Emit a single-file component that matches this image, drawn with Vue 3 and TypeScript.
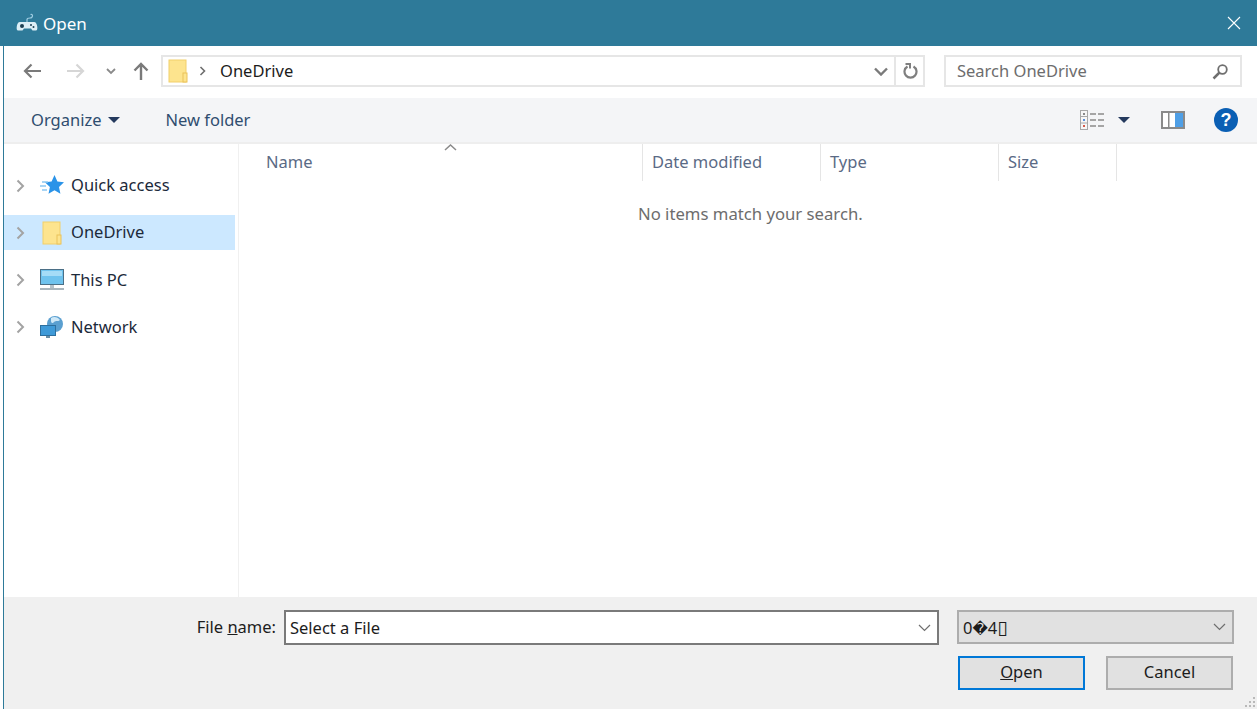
<script setup lang="ts">
const navItems = [
  { id: 'quick', label: 'Quick access' },
  { id: 'drive', label: 'OneDrive', selected: true },
  { id: 'pc', label: 'This PC' },
  { id: 'net', label: 'Network' },
]

const columns = [
  { label: 'Name', width: 404 },
  { label: 'Date modified', width: 178 },
  { label: 'Type', width: 178 },
  { label: 'Size', width: 118 },
]
</script>

<template>
  <div class="dialog">
    <header class="titlebar">
      <svg class="app-icon" width="22" height="20" viewBox="0 0 22 20">
        <path d="M11 9V6.500c0-1.500 1.500-1.500 3-1.500s2.500-.5 2.500-2.500c0-1-1-1.500-2-1" fill="none" stroke="#9fcde2" stroke-width="1.200" />
        <path d="M4 9h14c2 0 3 2 3.300 5 .2 2-.2 3.500-1.300 3.500h-3.500l-1.500-2h-7l-1.500 2H2c-1.100 0-1.500-1.500-1.300-3.500C1 11 2 9 4 9z" fill="#dcEEf6" />
        <circle cx="6" cy="13" r="2" fill="#1d3f52" />
        <circle cx="15" cy="12" r="1" fill="#1d3f52" />
        <circle cx="17.500" cy="14" r="1" fill="#1d3f52" />
      </svg>
      <span class="title">Open</span>
      <svg class="close" width="14" height="14" viewBox="0 0 14 14">
        <path d="M1 1l12 12M13 1L1 13" stroke="#fff" stroke-width="1.100" fill="none" />
      </svg>
    </header>

    <div class="body">
      <div class="navbar">
        <button class="nav-btn back">
          <svg width="20" height="18" viewBox="0 0 20 18"><path d="M19 9H3M9.500 2.500L3 9l6.500 6.500" fill="none" stroke="#7a7a7a" stroke-width="2.200" /></svg>
        </button>
        <button class="nav-btn forward">
          <svg width="20" height="18" viewBox="0 0 20 18"><path d="M1 9h16M10.500 2.500L17 9l-6.500 6.500" fill="none" stroke="#d6d6d6" stroke-width="2.200" /></svg>
        </button>
        <button class="nav-btn recent">
          <svg width="10" height="7" viewBox="0 0 10 7"><path d="M1 1l4 4 4-4" fill="none" stroke="#8a8a8a" stroke-width="1.800" /></svg>
        </button>
        <button class="nav-btn up">
          <svg width="18" height="20" viewBox="0 0 18 20"><path d="M9 19V3M2.500 9.500L9 3l6.500 6.500" fill="none" stroke="#7a7a7a" stroke-width="2.400" /></svg>
        </button>
        <div class="address">
          <svg class="folder" width="20" height="24" viewBox="0 0 20 24">
            <rect x="1" y="1" width="17" height="22" fill="#fde48e" stroke="#f2cf6a" />
            <rect x="15" y="14" width="4" height="9" fill="#fde48e" stroke="#eac25a" />
          </svg>
          <svg class="crumb" width="7" height="10" viewBox="0 0 7 10"><path d="M1.500 1l4 4-4 4" fill="none" stroke="#6e6e6e" stroke-width="1.600" /></svg>
          <span class="crumb-label">OneDrive</span>
          <svg class="addr-chevron" width="14" height="9" viewBox="0 0 14 9"><path d="M1 1.500l6 6 6-6" fill="none" stroke="#7a7a7a" stroke-width="2.400" /></svg>
          <div class="refresh">
            <svg width="16" height="18" viewBox="0 0 16 18">
              <path d="M5.500 4.500a6 6 0 1 0 6 0" fill="none" stroke="#7f7f7f" stroke-width="2.200" />
              <path d="M3.500 2h4.500v4.500" fill="none" stroke="#7f7f7f" stroke-width="2" />
            </svg>
          </div>
        </div>
        <div class="search">
          <span class="search-text">Search OneDrive</span>
          <svg width="17" height="17" viewBox="0 0 17 17">
            <circle cx="10.500" cy="6.500" r="4.300" fill="none" stroke="#6f6f6f" stroke-width="1.800" />
            <path d="M7.500 9.500L1.500 15.500" stroke="#6f6f6f" stroke-width="2.500" fill="none" />
          </svg>
        </div>
      </div>

      <div class="commandbar">
        <span class="cmd organize">Organize</span>
        <span class="caret"></span>
        <span class="cmd new-folder">New folder</span>
        <div class="cmd-right">
          <svg class="views" width="25" height="20" viewBox="0 0 25 20">
            <rect x="0.500" y="0.500" width="7" height="19" fill="#f7f7f7" stroke="#a8a8a8" />
            <path d="M1 6.500h6M1 13h6" stroke="#a8a8a8" />
            <rect x="3" y="3" width="2" height="2" fill="#8a8a8a" />
            <rect x="3" y="9" width="2" height="2" fill="#5b8fd8" />
            <rect x="3" y="15" width="2" height="2" fill="#d45a4a" />
            <path d="M10 4h6M18 4h6M10 10h6M18 10h6M10 16h6M18 16h6" stroke="#8a8a8a" stroke-width="1.300" />
          </svg>
          <span class="caret views-caret"></span>
          <svg class="pane" width="24" height="18" viewBox="0 0 24 18">
            <rect x="1" y="1" width="22" height="16" fill="#fff" stroke="#8a8a8a" stroke-width="2" />
            <rect x="7" y="2" width="1.500" height="14" fill="#8a8a8a" />
            <rect x="14" y="2" width="8" height="14" fill="#4f9fe6" />
          </svg>
          <svg class="help" width="24" height="24" viewBox="0 0 24 24">
            <circle cx="12" cy="12" r="12" fill="#0a5fb4" />
            <text x="12" y="18" text-anchor="middle" class="help-mark">?</text>
          </svg>
        </div>
      </div>

      <div class="main">
        <nav class="sidebar">
          <div v-for="item in navItems" :key="item.id" class="tree-row" :class="{ selected: item.selected }">
            <svg class="expander" width="9" height="14" viewBox="0 0 9 14"><path d="M1.500 1.500L7 7l-5.500 5.500" fill="none" stroke="#a3a3a3" stroke-width="2" /></svg>
            <span class="tree-icon">
              <svg v-if="item.id === 'quick'" width="24" height="22" viewBox="0 0 24 22">
                <path d="M14.500 0l2.900 6.500 6.600.7-5 4.700 1.400 6.800-5.900-3.500-6 3.500 1.400-6.800-5-4.700 6.700-.7z" fill="#2a93e8" />
                <path d="M2 7h6M0 11h6M2 15h5" stroke="#8cc8f2" stroke-width="1.300" />
              </svg>
              <svg v-else-if="item.id === 'drive'" width="20" height="24" viewBox="0 0 20 24">
                <rect x="1" y="1" width="17" height="22" fill="#fde48e" stroke="#f2cf6a" />
                <rect x="15" y="14" width="4" height="9" fill="#fde48e" stroke="#eac25a" />
              </svg>
              <svg v-else-if="item.id === 'pc'" width="26" height="24" viewBox="0 0 26 24">
                <rect x="1.500" y="1.500" width="23" height="15" fill="#6fc3ee" stroke="#4b6f86" />
                <rect x="3" y="3" width="20" height="5" fill="#a5dcf7" />
                <rect x="11" y="17" width="4" height="3" fill="#b6c2c9" />
                <rect x="1" y="20" width="24" height="2" fill="#aab6bd" />
              </svg>
              <svg v-else width="26" height="24" viewBox="0 0 26 24">
                <circle cx="16" cy="9" r="8" fill="#5a9fd0" />
                <path d="M12 3c3-2 7-1 9 2-2 2-4 0-6 2-1 2-3 1-3-1z" fill="#cfe8f7" />
                <rect x="1.500" y="10.500" width="15" height="10" fill="#3f9ad8" stroke="#2d6f9e" />
                <rect x="7" y="21" width="4" height="2" fill="#6b8ea5" />
              </svg>
            </span>
            <span class="tree-label">{{ item.label }}</span>
          </div>
        </nav>

        <section class="content">
          <div class="sort-mark">
            <svg width="13" height="7" viewBox="0 0 13 7"><path d="M1 6l5.500-5L12 6" fill="none" stroke="#8a8a8a" stroke-width="1.500" /></svg>
          </div>
          <div class="columns">
            <div
              v-for="col in columns"
              :key="col.label"
              class="column"
              :style="{ width: col.width + 'px' }"
            >{{ col.label }}</div>
          </div>
          <p class="empty">No items match your search.</p>
        </section>
      </div>

      <footer class="footer">
        <div class="file-row">
          <label class="file-label">File <u>n</u>ame:</label>
          <div class="file-input">
            <span>Select a File</span>
            <svg width="13" height="8" viewBox="0 0 13 8"><path d="M1 1l5.500 5.500L12 1" fill="none" stroke="#6f6f6f" stroke-width="1.200" /></svg>
          </div>
          <div class="file-type">
            <span>0<span class="bad-char">�</span>4<span class="tofu">▯</span></span>
            <svg width="13" height="8" viewBox="0 0 13 8"><path d="M1 1l5.500 5.500L12 1" fill="none" stroke="#6f6f6f" stroke-width="1.200" /></svg>
          </div>
        </div>
        <div class="button-row">
          <button class="btn primary"><u>O</u>pen</button>
          <button class="btn">Cancel</button>
        </div>
        <svg class="grip" width="12" height="12" viewBox="0 0 12 12">
          <path d="M9 1h2v2H9zM5 5h2v2H5zM9 5h2v2H9zM1 9h2v2H1zM5 9h2v2H5zM9 9h2v2H9z" fill="#b9b9b9" />
        </svg>
      </footer>
    </div>
  </div>
</template>

<style>
html,
body {
  margin: 0;
  background: #fff;
}
</style>

<style scoped>
.dialog {
  width: 1257px;
  height: 709px;
  display: flex;
  flex-direction: column;
  font-family: "Noto Sans", "Open Sans", sans-serif;
  font-size: 16.500px;
  color: #1c1c1c;
  overflow: hidden;
}

.titlebar {
  height: 46px;
  flex: none;
  background: #2e7a99;
  display: flex;
  align-items: center;
  padding: 0 16px 0 16px;
  color: #fff;
}

.app-icon {
  margin-right: 5px;
}

.title {
  font-size: 17px;
  flex: 1;
}

.body {
  flex: 1;
  display: flex;
  flex-direction: column;
  margin-left: 3px;
  border-left: 1px solid #2e7a99;
  min-height: 0;
}

.navbar {
  height: 52px;
  flex: none;
  box-sizing: border-box;
  padding-bottom: 2px;
  display: flex;
  align-items: center;
  background: #fff;
}

.nav-btn {
  border: 0;
  background: none;
  padding: 0;
  display: flex;
  align-items: center;
  justify-content: center;
}

.back { margin-left: 18px; width: 20px; }
.forward { margin-left: 24px; width: 20px; }
.recent { margin-left: 20px; width: 10px; }
.up { margin-left: 16px; width: 18px; }

.address {
  margin-left: 11px;
  width: 764px;
  height: 32px;
  box-sizing: border-box;
  border: 2px solid #e6e6e6;
  display: flex;
  align-items: center;
  padding-left: 5px;
}

.crumb {
  margin-left: 11px;
}

.crumb-label {
  margin-left: 14px;
  padding-bottom: 2px;
  flex: 1;
}

.addr-chevron {
  margin-right: 6px;
}

.refresh {
  width: 27px;
  height: 100%;
  border-left: 2px solid #e6e6e6;
  display: flex;
  align-items: center;
  justify-content: center;
}

.search {
  margin-left: 19px;
  width: 298px;
  height: 32px;
  box-sizing: border-box;
  border: 2px solid #e6e6e6;
  display: flex;
  align-items: center;
  justify-content: space-between;
  padding: 0 11px 0 11px;
  color: #6d6d6d;
}

.search-text {
  padding-bottom: 2px;
}

.commandbar {
  height: 46px;
  flex: none;
  box-sizing: border-box;
  background: #f4f5f7;
  border-bottom: 2px solid #eeeeee;
  display: flex;
  align-items: center;
  padding-left: 27px;
  color: #2f4d6f;
}

.cmd {
  padding-bottom: 2px;
}

.cmd-right {
  margin-left: auto;
  display: flex;
  align-items: center;
  padding-right: 19px;
}

.caret {
  width: 0;
  height: 0;
  border-left: 6px solid transparent;
  border-right: 6px solid transparent;
  border-top: 6px solid #243a5e;
  margin-left: 7px;
}

.new-folder {
  margin-left: 45px;
}

.views-caret {
  margin-left: 13px;
}

.pane {
  margin-left: 31px;
}

.help {
  margin-left: 29px;
}

.help-mark {
  font-family: "Liberation Sans", sans-serif;
  font-weight: 700;
  font-size: 18px;
  fill: #fff;
}

.main {
  flex: 1;
  display: flex;
  min-height: 0;
  background: #fff;
}

.sidebar {
  width: 235px;
  flex: none;
  box-sizing: border-box;
  border-right: 1px solid #f0f0f0;
  padding-top: 24px;
  display: flex;
  flex-direction: column;
  gap: 12.300px;
}

.tree-row {
  height: 35px;
  width: 231px;
  display: flex;
  align-items: center;
  color: #1c2a3a;
}

.tree-row.selected {
  background: #cce8ff;
}

.expander {
  margin-left: 12px;
  flex: none;
}

.tree-icon {
  width: 28px;
  margin-left: 13px;
  display: flex;
  justify-content: center;
  flex: none;
}

.tree-label {
  margin-left: 5px;
  padding-bottom: 2px;
}

.content {
  flex: 1;
  position: relative;
}

.sort-mark {
  position: absolute;
  left: 205px;
  top: 0;
  line-height: 0;
}

.columns {
  height: 37px;
  display: flex;
}

.column {
  box-sizing: border-box;
  height: 37px;
  line-height: 35px;
  padding-left: 9px;
  border-right: 1px solid #e5e5e5;
  color: #5a6a85;
}

.column:first-child {
  padding-left: 27px;
}

.empty {
  margin: 22px 0 0 399px;
  color: #6d6d6d;
  font-size: 16.700px;
  line-height: 22px;
}

.footer {
  height: 112px;
  flex: none;
  box-sizing: border-box;
  background: #f0f0f0;
  padding-top: 13px;
  position: relative;
}

.file-row {
  display: flex;
  align-items: flex-start;
}

.file-label {
  width: 272px;
  text-align: right;
  line-height: 34px;
  color: #1c1c1c;
}

.file-input {
  margin-left: 8px;
  width: 655px;
  height: 35px;
  box-sizing: border-box;
  background: #fff;
  border: 2px solid #7a7a7a;
  display: flex;
  align-items: center;
  justify-content: space-between;
  padding: 0 6px 0 4px;
}

.file-type {
  margin-left: 18px;
  width: 277px;
  height: 34px;
  box-sizing: border-box;
  background: #e1e1e1;
  border: 2px solid #adadad;
  display: flex;
  align-items: center;
  justify-content: space-between;
  padding: 0 6px 0 4px;
}

.bad-char,
.tofu {
  font-family: "DejaVu Sans", sans-serif;
}

.bad-char {
  font-size: 15px;
}

.tofu {
  font-size: 19px;
  line-height: 1;
}

.button-row {
  display: flex;
  margin: 11px 0 0 954px;
  gap: 21px;
}

.btn {
  width: 127px;
  height: 34px;
  box-sizing: border-box;
  background: #e1e1e1;
  border: 2px solid #adadad;
  font: inherit;
  color: #1c1c1c;
  padding: 0 0 3px;
}

.btn.primary {
  border-color: #0078d7;
}

.grip {
  position: absolute;
  right: 1px;
  bottom: 1px;
}
</style>
